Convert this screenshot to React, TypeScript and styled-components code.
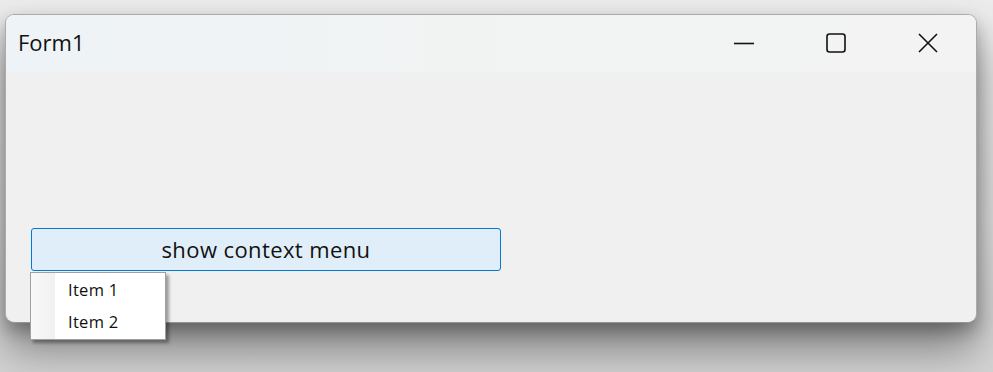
import styled, { createGlobalStyle } from 'styled-components';

const GlobalStyle = createGlobalStyle`
  html, body {
    margin: 0;
    padding: 0;
  }
  body {
    width: 993px;
    height: 372px;
    overflow: hidden;
    background: linear-gradient(180deg, #ececec 0%, #e2e2e2 60%, #d4d4d4 100%);
    font-family: "Open Sans", "Noto Sans", sans-serif;
  }
`

const Stage = styled.div`
  padding: 14px 0 0 5px;
`

const Window = styled.div`
  position: relative;
  width: 972px;
  height: 309px;
  box-sizing: border-box;
  border: 1px solid #ababab;
  border-bottom-color: #959595;
  border-radius: 9px;
  background: #f0f0f0;
  box-shadow: 0 26px 44px rgba(0, 0, 0, 0.42), 0 8px 16px rgba(0, 0, 0, 0.26);
  display: flex;
  flex-direction: column;
`

const TitleBar = styled.div`
  height: 57px;
  display: flex;
  align-items: center;
  padding-right: 2px;
  border-radius: 8px 8px 0 0;
  background: linear-gradient(90deg, #eef3f7 0%, #f1f3f3 45%, #f3f3f3 100%);
`

const Title = styled.div`
  flex: 1;
  padding-left: 12px;
  padding-bottom: 4px;
  font-family: "Open Sans", sans-serif;
  font-size: 22px;
  color: #111;
`

const CaptionButton = styled.div`
  width: 92px;
  height: 57px;
  display: flex;
  align-items: center;
  justify-content: center;
  padding-bottom: 2px;
  box-sizing: border-box;
`

const Body = styled.div`
  flex: 1;
  padding: 156px 0 0 25px;
`

const MenuButton = styled.div`
  width: 470px;
  height: 43px;
  box-sizing: border-box;
  border: 1px solid #0078d4;
  border-radius: 3px;
  background: #e0eef9;
  display: flex;
  align-items: center;
  justify-content: center;
  font-size: 22px;
  letter-spacing: 0.4px;
  color: #111;
  padding-bottom: 2px;
`

const ContextMenu = styled.div`
  position: absolute;
  left: 24px;
  top: 257px;
  width: 136px;
  height: 68px;
  box-sizing: border-box;
  border: 1px solid #a0a0a0;
  background: #ffffff;
  box-shadow: 3px 3px 3px rgba(0, 0, 0, 0.35);
  display: flex;
`

const Gutter = styled.div`
  width: 24px;
  background: linear-gradient(90deg, #f9f9f9, #f1f1f1);
`

const Items = styled.div`
  display: flex;
  flex-direction: column;
`

const MenuItem = styled.div`
  height: 32px;
  display: flex;
  align-items: center;
  padding-left: 13px;
  font-size: 16.5px;
  letter-spacing: 0.3px;
  color: #111;
`

const Glyph = styled.svg`
  display: block;
`

export default function App() {
  return (
    <>
      <GlobalStyle />
      <Stage>
        <Window>
          <TitleBar>
            <Title>Form1</Title>
            <CaptionButton>
              <Glyph width="22" height="22" viewBox="0 0 22 22">
                <line x1="1" y1="11.5" x2="21" y2="11.5" stroke="#111" strokeWidth="1.6" />
              </Glyph>
            </CaptionButton>
            <CaptionButton>
              <Glyph width="22" height="22" viewBox="0 0 22 22">
                <rect x="2" y="2" width="18" height="18" rx="2.5" fill="none" stroke="#111" strokeWidth="1.6" />
              </Glyph>
            </CaptionButton>
            <CaptionButton>
              <Glyph width="22" height="22" viewBox="0 0 22 22">
                <path d="M2 2 L20 20 M20 2 L2 20" stroke="#111" strokeWidth="1.6" fill="none" />
              </Glyph>
            </CaptionButton>
          </TitleBar>
          <Body>
            <MenuButton>show context menu</MenuButton>
          </Body>
          <ContextMenu>
            <Gutter />
            <Items>
              <MenuItem>Item 1</MenuItem>
              <MenuItem>Item 2</MenuItem>
            </Items>
          </ContextMenu>
        </Window>
      </Stage>
    </>
  )
}
